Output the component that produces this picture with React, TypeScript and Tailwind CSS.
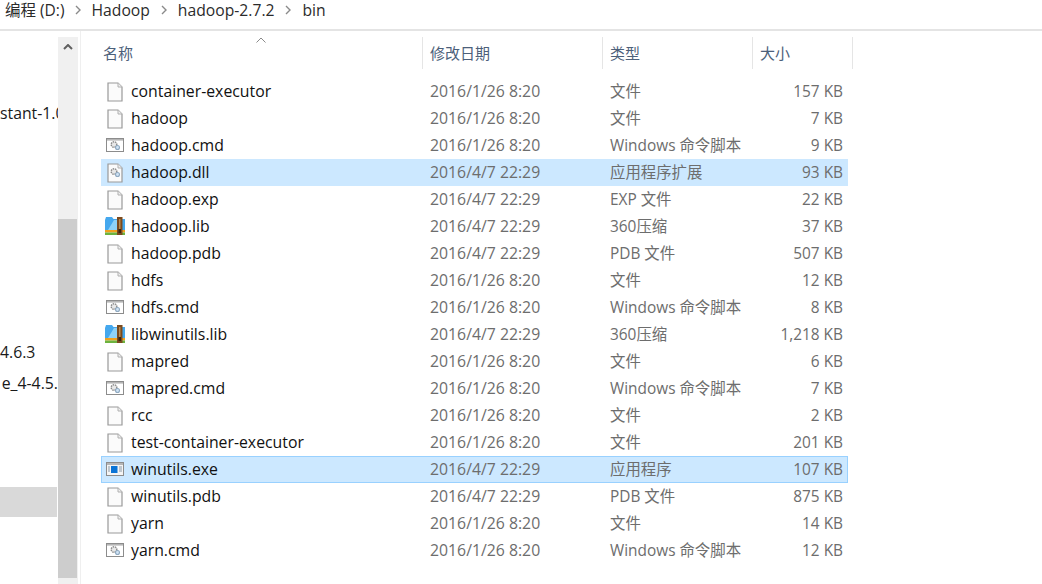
const font = { fontFamily: '"Open Sans", "Noto Sans CJK SC", sans-serif' };

type Kind = "file" | "cmd" | "dll" | "zip" | "exe";

const files: { name: string; date: string; type: string; size: string; icon: Kind; selected?: boolean }[] = [
  { name: "container-executor", date: "2016/1/26 8:20", type: "文件", size: "157 KB", icon: "file" },
  { name: "hadoop", date: "2016/1/26 8:20", type: "文件", size: "7 KB", icon: "file" },
  { name: "hadoop.cmd", date: "2016/1/26 8:20", type: "Windows 命令脚本", size: "9 KB", icon: "cmd" },
  { name: "hadoop.dll", date: "2016/4/7 22:29", type: "应用程序扩展", size: "93 KB", icon: "dll", selected: true },
  { name: "hadoop.exp", date: "2016/4/7 22:29", type: "EXP 文件", size: "22 KB", icon: "file" },
  { name: "hadoop.lib", date: "2016/4/7 22:29", type: "360压缩", size: "37 KB", icon: "zip" },
  { name: "hadoop.pdb", date: "2016/4/7 22:29", type: "PDB 文件", size: "507 KB", icon: "file" },
  { name: "hdfs", date: "2016/1/26 8:20", type: "文件", size: "12 KB", icon: "file" },
  { name: "hdfs.cmd", date: "2016/1/26 8:20", type: "Windows 命令脚本", size: "8 KB", icon: "cmd" },
  { name: "libwinutils.lib", date: "2016/4/7 22:29", type: "360压缩", size: "1,218 KB", icon: "zip" },
  { name: "mapred", date: "2016/1/26 8:20", type: "文件", size: "6 KB", icon: "file" },
  { name: "mapred.cmd", date: "2016/1/26 8:20", type: "Windows 命令脚本", size: "7 KB", icon: "cmd" },
  { name: "rcc", date: "2016/1/26 8:20", type: "文件", size: "2 KB", icon: "file" },
  { name: "test-container-executor", date: "2016/1/26 8:20", type: "文件", size: "201 KB", icon: "file" },
  { name: "winutils.exe", date: "2016/4/7 22:29", type: "应用程序", size: "107 KB", icon: "exe", selected: true },
  { name: "winutils.pdb", date: "2016/4/7 22:29", type: "PDB 文件", size: "875 KB", icon: "file" },
  { name: "yarn", date: "2016/1/26 8:20", type: "文件", size: "14 KB", icon: "file" },
  { name: "yarn.cmd", date: "2016/1/26 8:20", type: "Windows 命令脚本", size: "12 KB", icon: "cmd" },
];

function Gears() {
  return (
    <>
      <circle cx="9" cy="8.5" r="2.8" fill="#e8e8e8" stroke="#8a8a8a" strokeWidth="1.4" strokeDasharray="1.5 0.8" />
      <circle cx="12.5" cy="11.5" r="2" fill="#cfe3f5" stroke="#8fa9c0" strokeWidth="1.1" />
    </>
  );
}

function FileIcon({ kind }: { kind: Kind }) {
  if (kind === "zip") {
    return (
      <svg width="20" height="20" viewBox="0 0 20 20">
        <path d="M0 3 L1 0 H7 L8.5 2 H20 V13 H0 Z" fill="#45a8ee" />
        <path d="M3 13 L9 3 H12 V13 Z" fill="#8ed2f7" />
        <rect x="0" y="13" width="20" height="2.5" fill="#f0a01c" />
        <rect x="0" y="15.5" width="20" height="2.5" fill="#6cb33f" />
        <rect x="12" y="0" width="5.5" height="18" fill="#7b4a1e" />
        <rect x="14" y="2" width="1.5" height="10" fill="#b98a4e" />
        <rect x="13.5" y="12" width="2.5" height="4" fill="#3a2410" />
      </svg>
    );
  }
  if (kind === "cmd") {
    return (
      <svg width="20" height="20" viewBox="0 0 20 20">
        <rect x="1.5" y="2.5" width="17" height="13" fill="#fff" stroke="#8c8c8c" />
        <rect x="2" y="3" width="16" height="1.6" fill="#b5b5b5" />
        <Gears />
      </svg>
    );
  }
  if (kind === "exe") {
    return (
      <svg width="20" height="20" viewBox="0 0 20 20">
        <rect x="1.5" y="2.5" width="17" height="13" fill="#f4f4f4" stroke="#8c8c8c" />
        <rect x="2" y="3" width="16" height="2" fill="#b5b5b5" />
        <rect x="6" y="6" width="6.5" height="7" fill="#0a74d6" />
        <path d="M3 7h2M3 9h2M3 11h2M14 7h3M14 9h3M14 11h3" stroke="#8a9aa8" strokeWidth="1" />
      </svg>
    );
  }
  return (
    <svg width="20" height="20" viewBox="0 0 20 20">
      <path d="M3 1 H13 L17 5 V19 H3 Z" fill="#fbfbfb" stroke="#999999" strokeWidth="1.2" />
      <path d="M13 1 V5 H17" fill="#f0f0f0" stroke="#b0b0b0" />
      {kind === "dll" && <Gears />}
    </svg>
  );
}

function Crumb({ children, className = "" }: { children: string; className?: string }) {
  return <span className={`text-[15.7px] leading-[20px] text-[#2b2b2b] ${className}`}>{children}</span>;
}

function Chevron() {
  return (
    <svg width="6" height="10" viewBox="0 0 6 10" className="mx-[11px] mt-[5px]">
      <path d="M1 1 L5 5 L1 9" fill="none" stroke="#8a8a8a" strokeWidth="1.4" />
    </svg>
  );
}

function NavText({ children, className }: { children: string; className: string }) {
  return (
    <div className={`flex h-[20px] items-center overflow-hidden whitespace-nowrap text-[15.8px] leading-[20px] text-[#1a1a1a] ${className}`}>
      {children}
    </div>
  );
}

function HeadCell({ children, className }: { children: string; className: string }) {
  return (
    <div className={`flex h-[32px] items-center border-r border-[#e5e5e5] pl-[7px] text-[15px] text-[#4c607a] ${className}`}>
      {children}
    </div>
  );
}

export default function App() {
  return (
    <div className="flex h-[584px] w-[1042px] flex-col overflow-hidden bg-white" style={font}>
      {/* address bar */}
      <div className="flex h-[31px] shrink-0 items-start border-b-2 border-[#e4e4e4] pl-[5px]">
        <Crumb className="-mr-[1px] !text-[15.5px]">编程 (D:)</Crumb>
        <Chevron />
        <Crumb>Hadoop</Crumb>
        <Chevron />
        <Crumb>hadoop-2.7.2</Crumb>
        <Chevron />
        <Crumb>bin</Crumb>
      </div>

      <div className="flex min-h-0 flex-1">
        {/* nav pane, cut off at the left */}
        <div className="flex w-[58px] shrink-0 flex-col overflow-hidden">
          <NavText className="mt-[72px]">stant-1.0</NavText>
          <NavText className="mt-[219px]">4.6.3</NavText>
          <NavText className="mt-[11px] justify-end">e_4-4.5.</NavText>
          <div className="mt-[94px] h-[30px] w-[57px] bg-[#d9d9d9]" />
        </div>

        {/* scrollbar */}
        <div className="mt-[6px] flex w-[20px] shrink-0 flex-col bg-[#f0f0f0]">
          <div className="flex h-[19px] items-center justify-center pr-[1px]">
            <svg width="10" height="6" viewBox="0 0 10 6">
              <path d="M1 5 L5 1 L9 5" fill="none" stroke="#606060" strokeWidth="2" />
            </svg>
          </div>
          <div className="mt-[163px] h-[359px] w-[19px] bg-[#cdcdcd]" />
        </div>
        <div className="ml-[2px] w-[1px] shrink-0 bg-[#efefef]" />

        {/* file list */}
        <div className="relative ml-[21px] flex w-[760px] shrink-0 flex-col">
          <svg width="10" height="6" viewBox="0 0 10 6" className="absolute left-[154px] top-[6px]">
            <path d="M0.5 5.5 L5 1 L9.5 5.5" fill="none" stroke="#8a8a8a" />
          </svg>
          <div className="mt-[6px] flex">
            <HeadCell className="w-[321px] !pl-[1px]">名称</HeadCell>
            <HeadCell className="w-[180px]">修改日期</HeadCell>
            <HeadCell className="w-[150px]">类型</HeadCell>
            <HeadCell className="w-[100px]">大小</HeadCell>
          </div>
          <div className="mt-[9px] flex w-[746px] flex-col">
            {files.map((f) => (
              <div
                key={f.name}
                className={`-ml-[1px] flex h-[27px] items-center border ${
                  f.name === "winutils.exe"
                    ? "border-[#99d1ff] bg-[#cce8ff]"
                    : f.selected
                      ? "border-[#cce8ff] bg-[#cce8ff]"
                      : "border-transparent"
                }`}
              >
                <div className="ml-[3px] flex w-[20px] shrink-0 items-center justify-center">
                  <FileIcon kind={f.icon} />
                </div>
                <div className="ml-[6px] w-[299px] shrink-0 whitespace-nowrap text-[15.8px] text-[#111111]">{f.name}</div>
                <div className="w-[180px] shrink-0 text-[15.8px] text-[#6d6d6d]">{f.date}</div>
                <div className="w-[140px] shrink-0 whitespace-nowrap text-[15.4px] text-[#6d6d6d]">{f.type}</div>
                <div className="w-[93px] shrink-0 whitespace-nowrap text-right text-[15.4px] text-[#6d6d6d]">{f.size}</div>
              </div>
            ))}
          </div>
        </div>
      </div>
    </div>
  );
}
